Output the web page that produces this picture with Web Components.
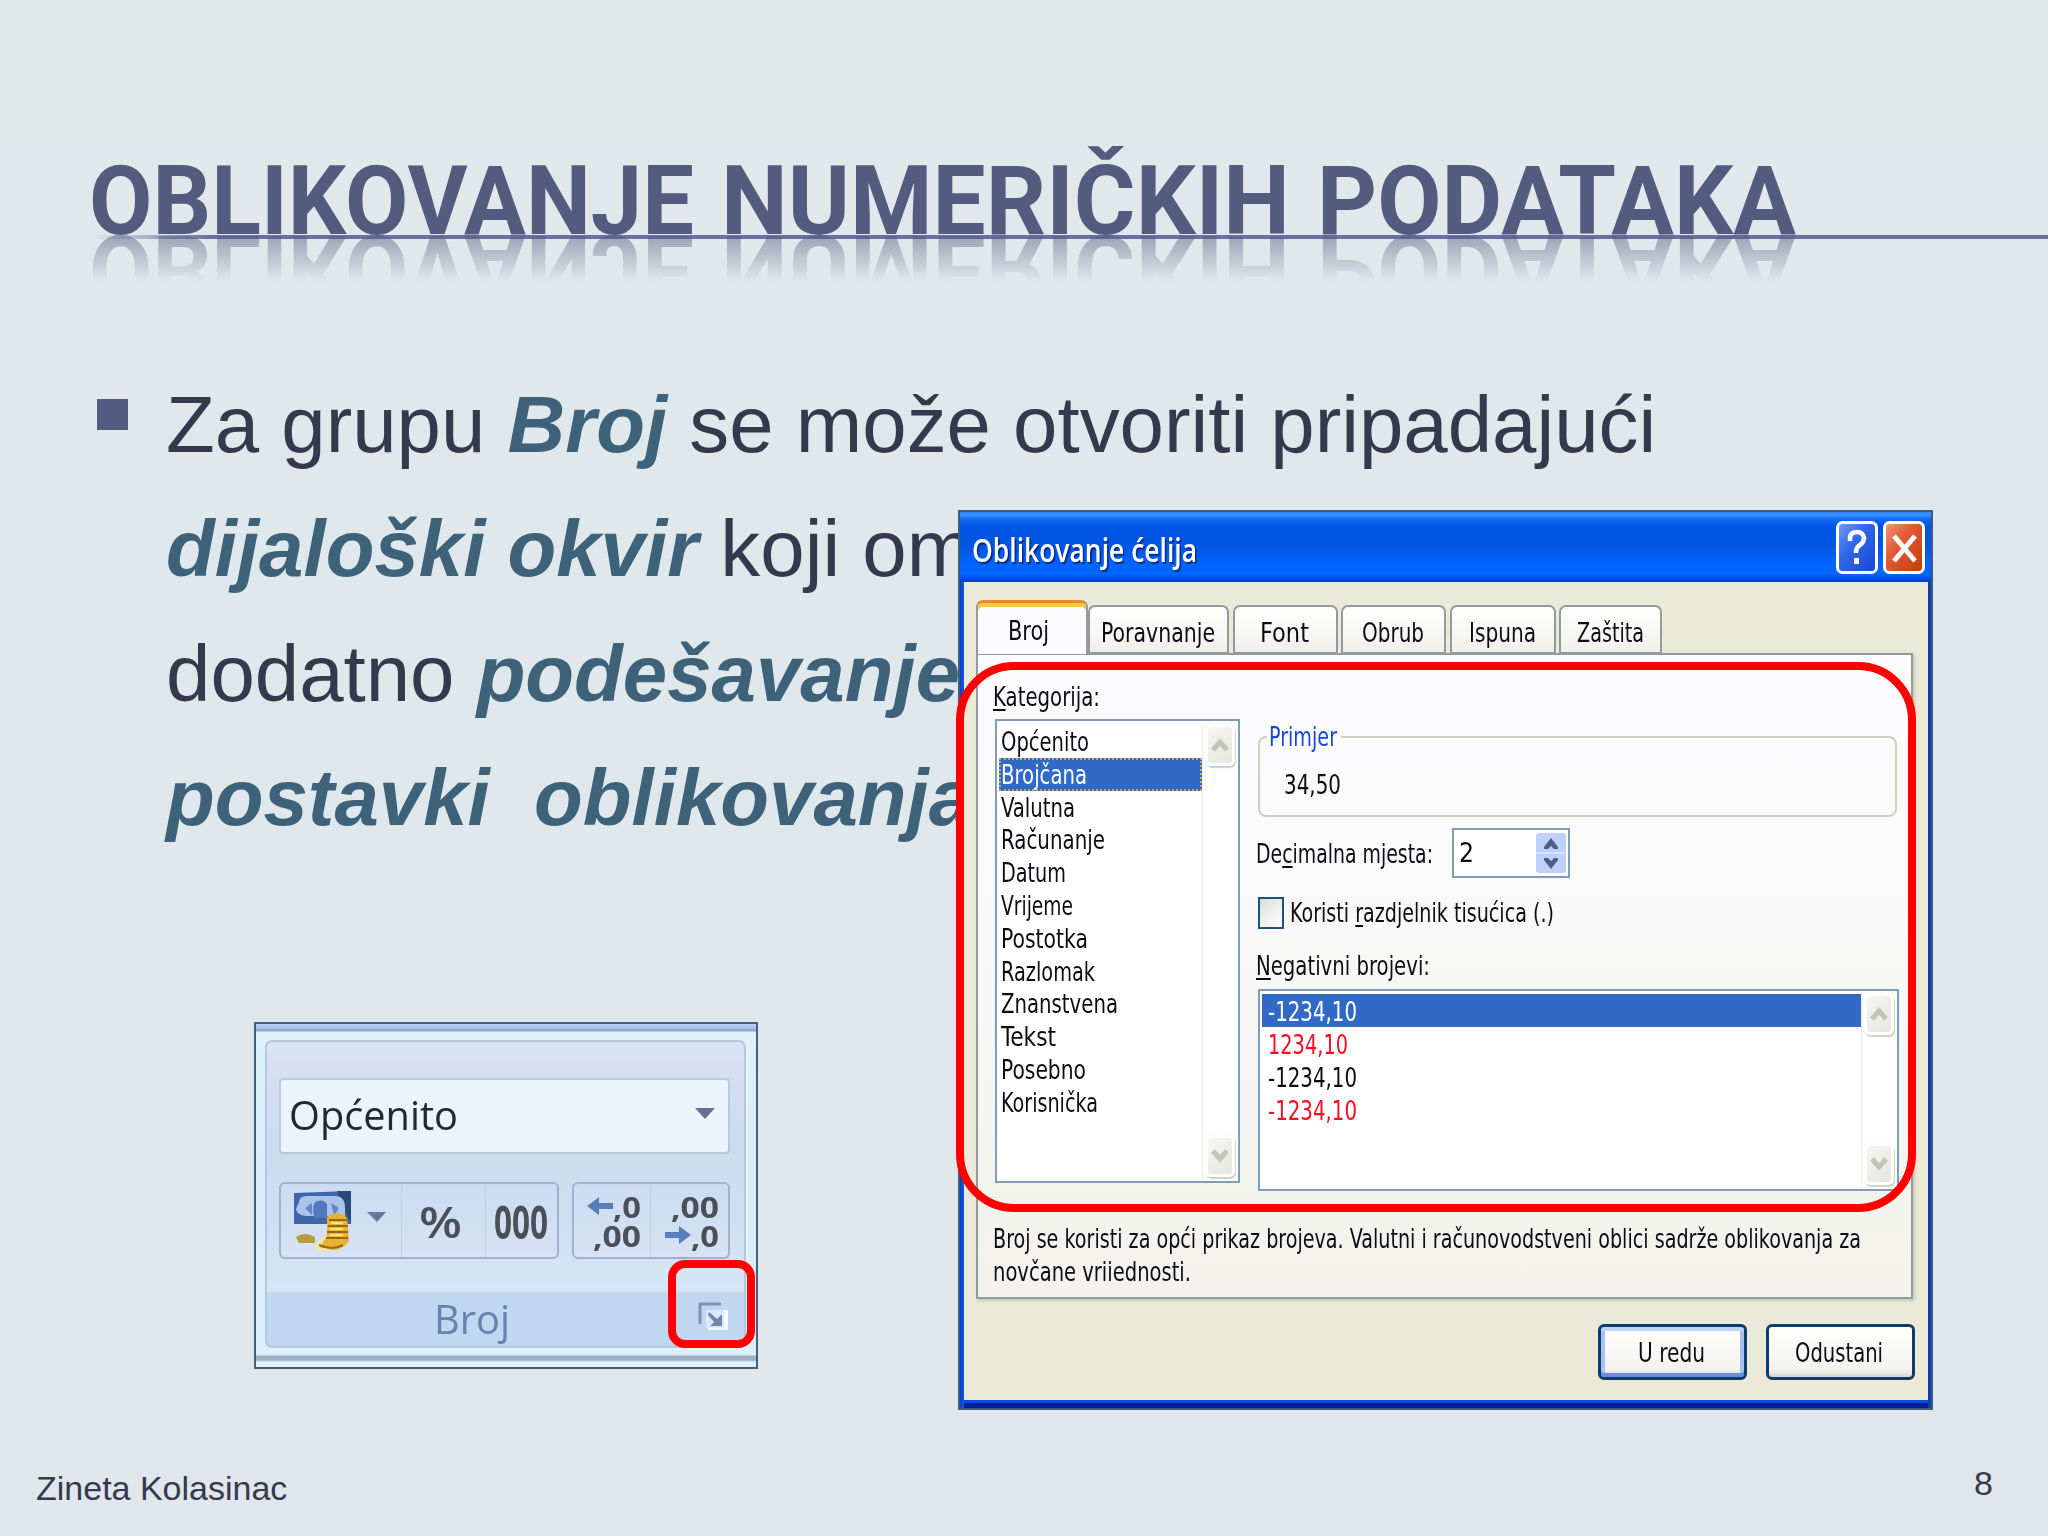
<!DOCTYPE html>
<html lang="hr">
<head>
<meta charset="utf-8">
<title>Oblikovanje numeričkih podataka</title>
<style>
  html, body {
    margin: 0;
    height: 100%;
    overflow: hidden;
  }
</style>
</head>
<body>
<slide-page>
  <slide-title slot="title">
    <fit-text width="605">OBLIKOVANJE</fit-text>
    <fit-text width="569">NUMERIČKIH</fit-text>
    <fit-text width="479">PODATAKA</fit-text>
  </slide-title>
  <slide-bullet slot="body"></slide-bullet>
  <ribbon-group slot="windows"></ribbon-group>
  <format-dialog slot="windows"></format-dialog>
  <span slot="author">Zineta Kolasinac</span>
  <span slot="number">8</span>
</slide-page>

<script>
class SlidePage extends HTMLElement {
  constructor () {
    super()
    this.attachShadow({ mode: 'open' })
    this.shadowRoot.innerHTML =
      /* html */`
        <style>
          :host {
            background: linear-gradient(hsl(185, 16%, 90%), hsl(198, 24%, 90%) 18%, hsl(202, 24%, 90%));
            box-sizing: border-box;
            color: hsl(233, 18%, 26%);
            display: flex;
            flex-direction: column;
            font-family: "Liberation Sans", sans-serif;
            height: 1536px;
            overflow: hidden;
            position: relative;
            width: 2048px;
          }

          main {
            flex: 1;
          }

          footer {
            display: flex;
            font-size: 34px;
            justify-content: space-between;
            line-height: 38px;
            padding: 0 55px 29px 36px;
          }

          .number {
            margin-top: -5px;
          }
        </style>
        <slot name="title"></slot>
        <main><slot name="body"></slot></main>
        <footer>
          <slot name="author"></slot>
          <div class="number"><slot name="number"></slot></div>
        </footer>
        <slot name="windows"></slot>
      `
  }
}

class SlideTitle extends HTMLElement {
  constructor () {
    super()
    this.attachShadow({ mode: 'open' })
    this.shadowRoot.innerHTML =
      /* html */`
        <style>
          :host {
            background: linear-gradient(90deg, transparent 92px, hsl(237, 22%, 53%) 210px) 0 235px / 100% 4px no-repeat;
            box-sizing: border-box;
            color: hsl(229, 21%, 41%);
            display: block;
            font: 700 96px/96px Roboto, "Liberation Sans", sans-serif;
            height: 239px;
            padding: 153px 0 0 89px;
          }

          .words {
            display: flex;
            gap: 27px;
            -webkit-box-reflect: below -28px linear-gradient(transparent 37%, rgba(255, 255, 255, 0.48) 84%);
          }
        </style>
        <div class="words"><slot></slot></div>
      `
  }
}

class SlideBullet extends HTMLElement {
  constructor () {
    super()
    this.attachShadow({ mode: 'open' })
    this.shadowRoot.innerHTML =
      /* html */`
        <style>
          :host {
            display: flex;
            font-size: 79.8px;
            gap: 38px;
            line-height: 124.4px;
            padding: 124px 0 0 97px;
          }

          i {
            background: hsl(229, 21%, 41%);
            height: 31px;
            margin-top: 36px;
            width: 31px;
          }

          p {
            margin: 0;
            white-space: pre;
          }

          em {
            color: hsl(204, 33%, 36%);
            font-weight: bold;
          }
        </style>
        <i></i>
        <div>
          <p>Za grupu <em>Broj</em> se može otvoriti pripadajući</p>
          <p><em>dijaloški okvir</em> koji om</p>
          <p>dodatno <em>podešavanje</em></p>
          <p><em>postavki  oblikovanja</em></p>
        </div>
      `
  }
}

class RibbonGroup extends HTMLElement {
  constructor () {
    super()
    this.attachShadow({ mode: 'open' })
    this.shadowRoot.innerHTML =
      /* html */`
        <style>
          * {
            box-sizing: border-box;
          }

          :host {
            background: linear-gradient(#b9d0f2 0, #a9c0e6 5px, #8fa9d0 5px, #8fa9d0 7px, #dcf1fa 8px,
              #dcecf8 50%, #d9f0fa 331px, #9ab0c4 332px, #9ab0c4 336px, #dff0f8 338px);
            border: 2px solid #44607f;
            box-sizing: border-box;
            display: block;
            font-family: "Open Sans", "Noto Sans", sans-serif;
            height: 347px;
            left: 254px;
            padding: 16px 10px 0 9px;
            position: absolute;
            top: 1022px;
            width: 504px;
          }

          .group {
            background: linear-gradient(#dbe6f5, #d5def2 30px, #cddbee 110px, #cfdff2 180px, #d7e7f6 249px, #bfd8f0 251px);
            border: 2px solid #b3c8dc;
            border-radius: 7px;
            box-shadow: 2px 2px 0 #e8f6fb;
            display: flex;
            flex-direction: column;
            height: 308px;
            padding: 36px 14px 0 12px;
          }

          .combo {
            align-items: center;
            background: #ebf3fc;
            border: 2px solid #b9cadf;
            border-radius: 4px;
            color: #26262e;
            display: flex;
            font-size: 40px;
            font-weight: 500;
            height: 76px;
            justify-content: space-between;
            line-height: 54px;
            padding: 0 13px 3px 8px;
          }

          .combo svg {
            margin-top: -3px;
          }

          .buttons {
            display: flex;
            gap: 13px;
            margin-top: 28px;
          }

          .set {
            align-items: center;
            background: linear-gradient(#cbdcf2, #d7e2f3);
            border: 2px solid #9fb2d0;
            border-radius: 6px;
            color: #4b4f57;
            display: flex;
            flex: 281;
            height: 77px;
          }

          .set.decimals {
            flex: 157;
          }

          .set > * {
            align-items: center;
            border-left: 1px solid #bccfe8;
            display: flex;
            height: 100%;
            justify-content: center;
          }

          .set > :first-child {
            border: 0;
          }

          .set > .drop {
            border: 0;
            padding: 0 12px 7px 0;
            width: 37px;
          }

          .money { width: 83px; }
          .percent { font-size: 44px; font-weight: 600; padding-right: 7px; width: 84px; }
          .thousand { flex: 1; font-size: 46px; font-weight: 700; }

          .set .step {
            flex: 1;
            flex-direction: column;
            font-size: 29px;
            font-weight: 700;
            line-height: 29px;
          }

          .step div {
            align-items: center;
            display: flex;
            height: 29px;
            justify-content: flex-end;
            width: 58px;
          }

          .caption {
            align-items: center;
            color: #6583b0;
            display: flex;
            font-size: 40px;
            font-weight: 500;
            justify-content: flex-end;
            line-height: 50px;
            margin-top: 35px;
          }

          .caption svg {
            margin: -6px 2px 0 188px;
          }

          .mark {
            border: 8px solid #f00;
            border-radius: 17px;
            height: 88px;
            left: 412px;
            position: absolute;
            top: 236px;
            width: 87px;
          }
        </style>
        <div class="group">
          <div class="combo">
            <fit-text width="169">Općenito</fit-text>
            <svg width="20" height="11"><path d="M0 0h20l-10 11z" fill="#66728c"/></svg>
          </div>
          <div class="buttons">
            <div class="set">
              <div class="money">
                <svg width="60" height="62" viewBox="0 0 60 62">
                  <path d="M1 3L58 1v33H1z" fill="#3f66a8"/>
                  <path d="M44 1h14v33z" fill="#284a76"/>
                  <path d="M6 12q0-6 8-6h28q10 0 10 12v8H12q-9-2-9-7z" fill="#a9c3ec"/>
                  <path d="M22 12q8-4 12 2v14H22q-4-8 0-16z" fill="#5478c0"/>
                  <path d="M12 18l7-5v12zM38 13l8 5-5 8z" fill="#6485c8"/>
                  <path d="M3 47q8-6 19 0v6H6z" fill="#b99a3c"/>
                  <path d="M24 53q8-11 14-6v12q-8 5-16 0z" fill="#f2e5a9"/>
                  <path d="M34 27q11-8 20 1l2 23q-9 13-24 7l-5-1 7-11z" fill="#e9b32d"/>
                  <path d="M36 30h18M35 36h20M34 42h21M33 48h22M26 55q13 6 24 0" fill="none" stroke="#96681a" stroke-width="2"/>
                  <path d="M38 33h12M37 39h13M37 45h13" stroke="#ffe57c" stroke-width="2"/>
                </svg>
              </div>
              <div class="drop"><svg width="19" height="10"><path d="M0 0h19l-9 10z" fill="#66789c"/></svg></div>
              <div class="percent"><fit-text width="43">%</fit-text></div>
              <div class="thousand"><fit-text width="54">000</fit-text></div>
            </div>
            <div class="set decimals">
              <div class="step">
                <div><svg width="26" height="18"><path d="M0 9l12-9v6h14v6H12v6z" fill="#5a7dbb"/></svg><fit-text width="28">,0</fit-text></div>
                <div><fit-text width="48">,00</fit-text></div>
              </div>
              <div class="step">
                <div><fit-text width="48">,00</fit-text></div>
                <div><svg width="26" height="18"><path d="M26 9L14 0v6H0v6h14v6z" fill="#5a7dbb"/></svg><fit-text width="28">,0</fit-text></div>
              </div>
            </div>
          </div>
          <div class="caption">
            <fit-text width="76">Broj</fit-text>
            <svg width="30" height="28" viewBox="0 0 30 28">
              <path d="M2 22V2h21" fill="none" stroke="#7c93b3" stroke-width="3"/>
              <path d="M10 26h18V8" fill="none" stroke="#f2fafe" stroke-width="4"/>
              <path d="M8 8h18v18H8z" fill="#dce8f5"/>
              <path d="M11 10l8 7 5-5v12H12l4-4-6-7z" fill="#6f86aa"/>
            </svg>
          </div>
        </div>
        <div class="mark"></div>
      `
  }
}

class ListBox extends HTMLElement {
  constructor () {
    super()
    this.attachShadow({ mode: 'open' })
    this.shadowRoot.innerHTML =
      /* html */`
        <style>
          :host {
            background: #fff;
            border: 2px solid #7f9db9;
            box-sizing: border-box;
            display: flex;
            padding: 3px 2px 2px;
          }

          .items {
            flex: 1;
          }

          .bar {
            border-left: 1px solid #eeeee8;
            display: flex;
            flex-direction: column;
            justify-content: space-between;
            margin-top: -1px;
            padding-left: 1px;
            width: 32px;
          }

          .arrow {
            align-items: center;
            background: linear-gradient(135deg, #f6f6f2, #e6e6e0);
            border: 3px solid #fff;
            border-radius: 6px;
            box-shadow: 1px 2px 1px #d0d0c2, 0 0 1px #c8c8bc;
            box-sizing: border-box;
            display: flex;
            height: 42px;
            justify-content: center;
            margin: 0 1px 2px 1px;
          }

          .arrow.down svg {
            transform: scaleY(-1);
          }
        </style>
        <div class="items"><slot></slot></div>
        <div class="bar">
          <div class="arrow"><svg width="20" height="16"><path d="M3 13l7-8 7 8" fill="none" stroke="#c4c4bd" stroke-width="5"/></svg></div>
          <div class="arrow down"><svg width="20" height="16"><path d="M3 13l7-8 7 8" fill="none" stroke="#c4c4bd" stroke-width="5"/></svg></div>
        </div>
      `
  }
}

class FormatDialog extends HTMLElement {
  constructor () {
    super()
    this.attachShadow({ mode: 'open' })
    this.render()
  }

  render () {
    const tabs = [['Poravnanje', 141, 114], ['Font', 105, 49], ['Obrub', 105, 62], ['Ispuna', 106, 67], ['Zaštita', 103, 67]]
    const categories = [['Općenito', 88], ['Brojčana', 86], ['Valutna', 74], ['Računanje', 104], ['Datum', 65], ['Vrijeme', 72],
      ['Postotka', 87], ['Razlomak', 94], ['Znanstvena', 117], ['Tekst', 55], ['Posebno', 85], ['Korisnička', 97]]
    const numbers = [['-1234,10', 89, 'selected'], ['1234,10', 80, 'red'], ['-1234,10', 89, ''], ['-1234,10', 89, 'red']]

    this.shadowRoot.innerHTML =
      /* html */`
        <style>
          * {
            box-sizing: border-box;
          }

          :host {
            background: linear-gradient(90deg, #0d3fc0, #0a5cf0 4px, #0a5cf0 50%, #0f3fae);
            border: 2px solid #3f5d7a;
            box-sizing: border-box;
            color: #0c0c14;
            display: flex;
            flex-direction: column;
            font: 27px/33px "DejaVu Sans Condensed", "DejaVu Sans", sans-serif;
            height: 900px;
            left: 958px;
            position: absolute;
            top: 510px;
            width: 975px;
          }

          .titlebar {
            align-items: center;
            background: linear-gradient(#2b83f5, #3a93ff 3px, #0f6af2 7px, #0055e5 14px, #0055e0 34px, #0066ff 54px, #0066ff 62px, #0048d8 68px, #003cc0);
            color: #fff;
            display: flex;
            font: 600 33px/44px "Open Sans", "Noto Sans", sans-serif;
            gap: 5px;
            height: 70px;
            padding: 0 6px 0 12px;
            text-shadow: 2px 2px 1px #0a2a8c;
          }

          .titlebar fit-text {
            margin: 5px auto 0 0;
          }

          .titlebar svg {
            margin-top: 1px;
          }

          .body {
            background: #ebe9d8;
            box-shadow: 0 3px 0 #0a4be0, 0 8px 0 #001c9c;
            flex: 1;
            margin: 0 3px 8px 4px;
            padding: 18px 15px 0 12px;
          }

          .tabs {
            align-items: flex-end;
            display: flex;
            height: 54px;
            position: relative;
          }

          .tab {
            align-items: center;
            background: linear-gradient(#fff, #f0f0ea);
            border: 2px solid #919b9c;
            border-radius: 7px 7px 0 0;
            display: flex;
            height: 49px;
            justify-content: center;
            margin-right: 3.5px;
            padding: 6px 1px 0 0;
          }

          .tab.active {
            background: #fcfcfe;
            border-bottom: 0;
            border-color: #e68b2c #919b9c;
            border-top-width: 3px;
            box-shadow: inset 0 4px 0 #ffc73c;
            height: 54px;
            margin: 0;
            padding: 3px 8px 0 0;
            width: 112px;
          }

          .page {
            background: linear-gradient(#fcfcfe, #fafafb 30%, #f3f3ee 85%, #f4f2ee);
            border: 2px solid #919b9c;
            box-shadow: 2px 2px 3px #c9c7b6;
            height: 646px;
            margin-top: -1px;
            padding: 25px 12px 0 17px;
          }

          .columns {
            display: grid;
            gap: 18px;
            grid-template-columns: 245px 1fr;
          }

          .label {
            margin-left: -2px;
          }

          u {
            text-decoration-thickness: 2px;
            text-underline-offset: 3px;
          }

          .item {
            line-height: 32.8px;
            padding-left: 2px;
          }

          .item fit-text {
            position: relative;
            top: 1px;
          }

          .item.red {
            color: #f80c20;
          }

          .item.selected {
            background: #3169c6;
            color: #fff;
          }

          .categories .selected {
            outline: 2px dotted #c9a35c;
            outline-offset: -2px;
          }

          .categories {
            height: 464px;
            margin-top: 6px;
            padding-top: 4px;
          }

          .numbers {
            height: 202px;
            margin-top: 7px;
          }

          .numbers .item {
            line-height: 33px;
            padding-left: 6px;
          }

          fieldset {
            border: 2px solid #cfcfbf;
            border-radius: 8px;
            height: 97px;
            margin: 40px 2px 0 0;
            min-width: 0;
            padding: 15px 0 0 24px;
          }

          legend {
            color: #1a46d5;
            margin-left: -17px;
            padding: 0 4px 0 2px;
          }

          .row {
            align-items: center;
            display: flex;
          }

          .spinner {
            background: #fff;
            border: 2px solid #7f9db9;
            display: flex;
            height: 50px;
            justify-content: space-between;
            line-height: 46px;
            margin-left: 19px;
            padding: 0 2px 0 5px;
            width: 118px;
          }

          .spinner svg {
            margin-top: 3px;
          }

          .check {
            background: linear-gradient(135deg, #dcdcd7, #fff);
            border: 2px solid #1c5180;
            height: 32px;
            margin-right: 6px;
            width: 26px;
          }

          .hint {
            margin: 31px 0 0 -2px;
          }

          .actions {
            display: flex;
            gap: 19px;
            justify-content: flex-end;
            margin: 25px -2px 0 0;
          }

          button {
            align-items: center;
            background: linear-gradient(#fff, #f2f2ee 85%, #dcd4cc);
            border: 3px solid #0f3c6e;
            border-radius: 6px;
            color: inherit;
            display: flex;
            font: inherit;
            height: 56px;
            justify-content: center;
            padding: 0 3px 0 0;
            width: 149px;
          }

          button.default {
            box-shadow: inset 0 4px 0 #bcd4f8, inset 0 -4px 0 #6d8be0, inset 4px 0 0 #a6c2f2, inset -4px 0 0 #a6c2f2;
          }

          .mark {
            border: 8.5px solid #f00;
            border-radius: 58px;
            height: 550px;
            left: -4px;
            position: absolute;
            top: 150px;
            width: 960px;
          }
        </style>
        <div class="titlebar">
          <fit-text width="225">Oblikovanje ćelija</fit-text>
          <svg width="42" height="53" viewBox="0 0 42 53">
            <defs>
              <linearGradient id="blue" x2="1" y2="1"><stop stop-color="#7b9cf5"/><stop offset=".4" stop-color="#3268ea"/><stop offset="1" stop-color="#1746d0"/></linearGradient>
            </defs>
            <rect x="1.500" y="1.500" width="39" height="50" rx="5" fill="url(#blue)" stroke="#fff" stroke-width="3"/>
            <path d="M14 20v-4q1-5 7-5t7 6q0 4-4 7-4 2-4 8" fill="none" stroke="#fff" stroke-width="4.500"/>
            <path d="M18 37h5v6h-5z" fill="#fff"/>
          </svg>
          <svg width="42" height="53" viewBox="0 0 42 53">
            <defs>
              <linearGradient id="red" x2="1" y2="1"><stop stop-color="#f09a80"/><stop offset=".4" stop-color="#e25a32"/><stop offset="1" stop-color="#c43a0c"/></linearGradient>
            </defs>
            <rect x="1.500" y="1.500" width="39" height="50" rx="5" fill="url(#red)" stroke="#fff" stroke-width="3"/>
            <path d="M11 15l21 25M32 15L11 40" stroke="#fff" stroke-width="5"/>
          </svg>
        </div>
        <div class="body">
          <div class="tabs">
            <div class="tab active"><fit-text width="41">Broj</fit-text></div>
            ${tabs.map(([text, width, fit]) => `<div class="tab" style="width:${width}px"><fit-text width="${fit}">${text}</fit-text></div>`).join('')}
          </div>
          <div class="page">
            <div class="columns">
              <div>
                <div class="label"><fit-text width="107"><u>K</u>ategorija:</fit-text></div>
                <list-box class="categories">
                  ${categories.map(([text, fit], i) => `<div class="item${i === 1 ? ' selected' : ''}"><fit-text width="${fit}">${text}</fit-text></div>`).join('')}
                </list-box>
              </div>
              <div>
                <fieldset>
                  <legend><fit-text width="68">Primjer</fit-text></legend>
                  <fit-text width="57">34,50</fit-text>
                </fieldset>
                <div class="row" style="margin-top:11px">
                  <fit-text class="label" width="177">De<u>c</u>imalna mjesta:</fit-text>
                  <div class="spinner">
                    <fit-text width="15">2</fit-text>
                    <svg width="30" height="40" viewBox="0 0 30 40">
                      <rect width="30" height="40" rx="3" fill="#bfd0fa"/>
                      <path d="M0 20h30" stroke="#d8e2fc" stroke-width="2"/>
                      <path d="M15 5l7 9v2h-4l-3-3-3 3H8v-2zM15 36l7-9v-2h-4l-3 3-3-3H8v2z" fill="#4a5f8c"/>
                    </svg>
                  </div>
                </div>
                <div class="row" style="margin-top:18px">
                  <div class="check"></div>
                  <fit-text width="264">Koristi <u>r</u>azdjelnik tisućica (.)</fit-text>
                </div>
                <div class="label" style="margin-top:20px"><fit-text width="174"><u>N</u>egativni brojevi:</fit-text></div>
                <list-box class="numbers">
                  ${numbers.map(([text, fit, kind]) => `<div class="item ${kind}"><fit-text width="${fit}">${text}</fit-text></div>`).join('')}
                </list-box>
              </div>
            </div>
            <div class="hint">
              <fit-text width="868">Broj se koristi za opći prikaz brojeva. Valutni i računovodstveni oblici sadrže oblikovanja za</fit-text>
              <fit-text width="198">novčane vriiednosti.</fit-text>
            </div>
          </div>
          <div class="actions">
            <button class="default"><fit-text width="67">U redu</fit-text></button>
            <button><fit-text width="88">Odustani</fit-text></button>
          </div>
        </div>
        <div class="mark"></div>
      `
  }
}

// Squeezes one line of text to the given width
class FitText extends HTMLElement {
  constructor () {
    super()
    this.attachShadow({ mode: 'open' })
    this.shadowRoot.innerHTML =
      /* html */`
        <style>
          :host {
            display: block;
            flex: none;
          }

          span {
            display: inline-block;
            transform-origin: 0 0;
            vertical-align: top;
            white-space: nowrap;
          }
        </style>
        <span><slot></slot></span>
      `
  }

  connectedCallback () {
    const width = Number(this.getAttribute('width'))
    const span = this.shadowRoot.querySelector('span')

    this.style.width = `${width}px`
    span.style.transform = `scaleX(${width / span.getBoundingClientRect().width})`
  }
}

customElements.define('slide-page', SlidePage)
customElements.define('slide-title', SlideTitle)
customElements.define('slide-bullet', SlideBullet)
customElements.define('ribbon-group', RibbonGroup)
customElements.define('list-box', ListBox)
customElements.define('format-dialog', FormatDialog)
customElements.define('fit-text', FitText)
</script>
</body>
</html>
